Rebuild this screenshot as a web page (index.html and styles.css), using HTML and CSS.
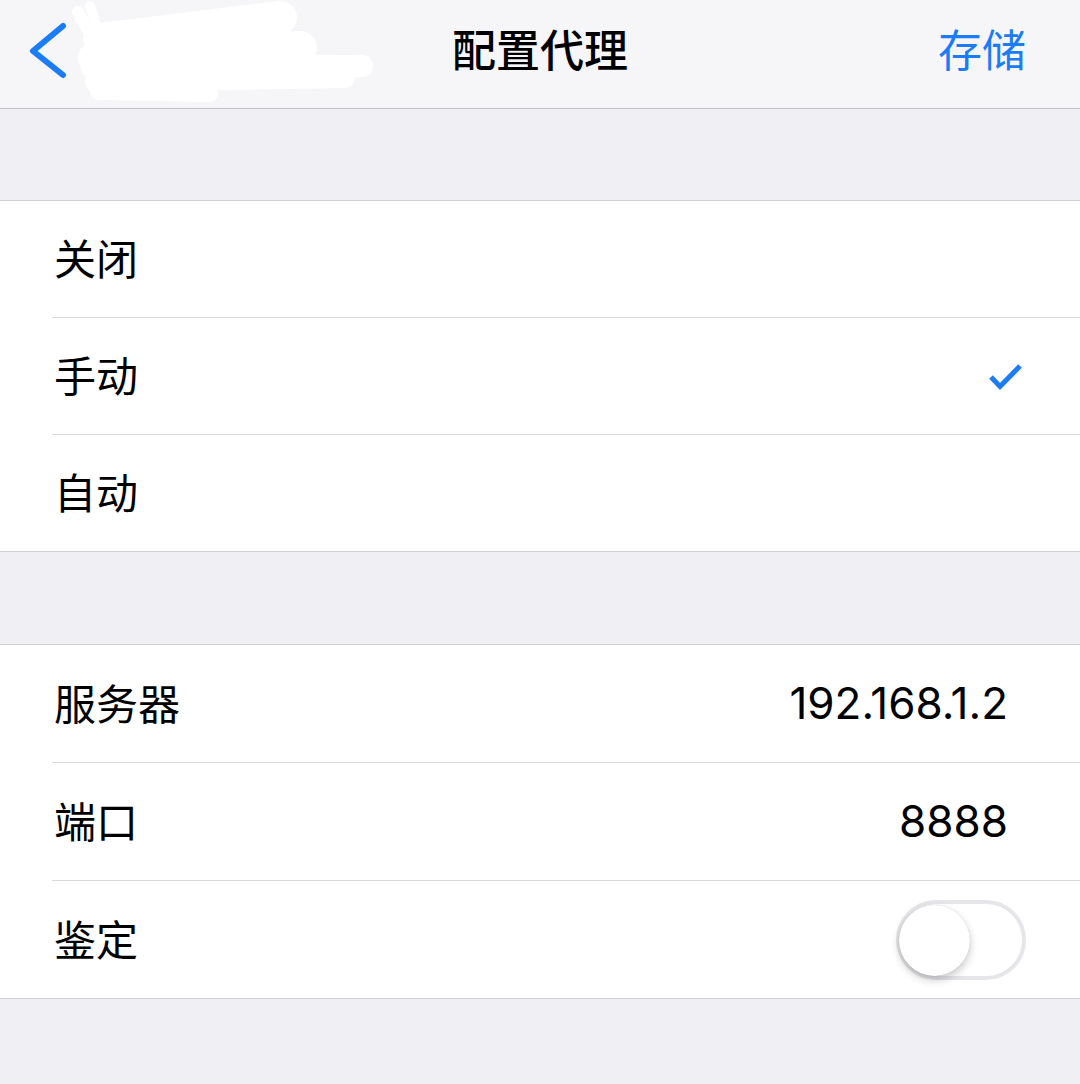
FILE: index.html
```html
<!DOCTYPE html>
<html lang="zh-CN">
<head>
  <meta charset="UTF-8" />
  <meta name="viewport" content="width=device-width, initial-scale=1.0" />
  <title>配置代理</title>
  <link rel="stylesheet" href="styles.css">
</head>
<body>
  <header class="navbar">
    <a class="back" href="#">
      <svg width="40" height="60" viewBox="0 0 40 60">
        <path d="M35 5 L5 30 L35 54" fill="none" stroke="#1b7cf5" stroke-width="6" stroke-linecap="round" stroke-linejoin="round" />
      </svg>
    </a>
    <svg class="scribble" width="400" height="108" viewBox="0 0 400 108">
      <g fill="none" stroke="#fff" stroke-linecap="round">
        <path d="M100 40 L280 18" stroke-width="34" />
        <path d="M95 58 L300 48" stroke-width="34" />
        <path d="M92 68 L362 66" stroke-width="22" />
        <path d="M95 82 L345 78" stroke-width="20" />
        <path d="M98 92 L210 94" stroke-width="16" />
        <path d="M78 12 L92 38" stroke-width="12" />
        <path d="M90 6 L98 30" stroke-width="10" />
        <path d="M280 40 L310 40" stroke-width="8" />
      </g>
    </svg>
    <h1 class="title">配置代理</h1>
    <a class="save" href="#">存储</a>
  </header>

  <div class="spacer"></div>

  <ul class="group">
    <li class="row"><span class="label">关闭</span></li>
    <li class="row">
      <span class="label">手动</span>
      <svg class="check" width="38" height="30" viewBox="0 0 38 30">
        <path d="M5 16 L14 25.5 L34 5" fill="none" stroke="#1b7cf5" stroke-width="5" stroke-linejoin="miter" />
      </svg>
    </li>
    <li class="row"><span class="label">自动</span></li>
  </ul>

  <div class="spacer spacer-wide"></div>

  <ul class="group group-tall">
    <li class="row">
      <span class="label">服务器</span>
      <span class="value">192.168.1.2</span>
    </li>
    <li class="row">
      <span class="label">端口</span>
      <span class="value">8888</span>
    </li>
    <li class="row">
      <span class="label">鉴定</span>
      <span class="toggle"><span class="knob"></span></span>
    </li>
  </ul>
</body>
</html>
```

FILE: styles.css
```css
body {
  margin: 0;
  background: #efeff4;
  font-family: "Noto Sans CJK SC", "Noto Sans", sans-serif;
  color: #000;
}
.navbar {
  position: relative;
  height: 108px;
  background: #f6f6f8;
  border-bottom: 1px solid #c2c2c8;
  display: flex;
  align-items: center;
  justify-content: space-between;
  padding: 0 54px 0 28px;
}
.back {
  display: flex;
  margin-bottom: 6px;
}
.scribble {
  position: absolute;
  left: 0;
  top: 0;
}
.title {
  position: absolute;
  left: 0;
  right: 0;
  top: 0;
  margin: 0;
  text-align: center;
  font-size: 44px;
  font-weight: 500;
  line-height: 96px;
  pointer-events: none;
}
.save {
  color: #1b7cf5;
  text-decoration: none;
  font-size: 44px;
  line-height: 96px;
  margin-bottom: 12px;
}
.spacer {
  height: 91px;
}
.spacer-wide {
  height: 92px;
}
.group {
  list-style: none;
  margin: 0;
  padding: 0;
  background: #fff;
  border-top: 1px solid #cfcfd4;
  border-bottom: 1px solid #cfcfd4;
}
.row {
  display: flex;
  align-items: center;
  justify-content: space-between;
  height: 116px;
  margin-left: 52px;
  padding-right: 54px;
}
.group-tall .row {
  height: 117px;
}
.row + .row {
  border-top: 1px solid #d9d9dd;
}
.label {
  font-size: 42px;
  padding-left: 2px;
  padding-bottom: 5px;
}
.value {
  font-family: Inter, "Noto Sans", sans-serif;
  font-size: 44px;
  margin-right: 18px;
  padding-bottom: 2px;
}
.check {
  margin-right: 2px;
}
.toggle {
  position: relative;
  width: 122px;
  height: 72px;
  border: 4px solid #e6e6ea;
  border-radius: 40px;
  background: #fff;
}
.knob {
  position: absolute;
  left: -1px;
  top: 1px;
  width: 71px;
  height: 71px;
  border-radius: 50%;
  background: #fff;
  box-shadow: 0 4px 8px rgba(0, 0, 0, 0.22), 0 0 1px rgba(0, 0, 0, 0.2);
}
```
